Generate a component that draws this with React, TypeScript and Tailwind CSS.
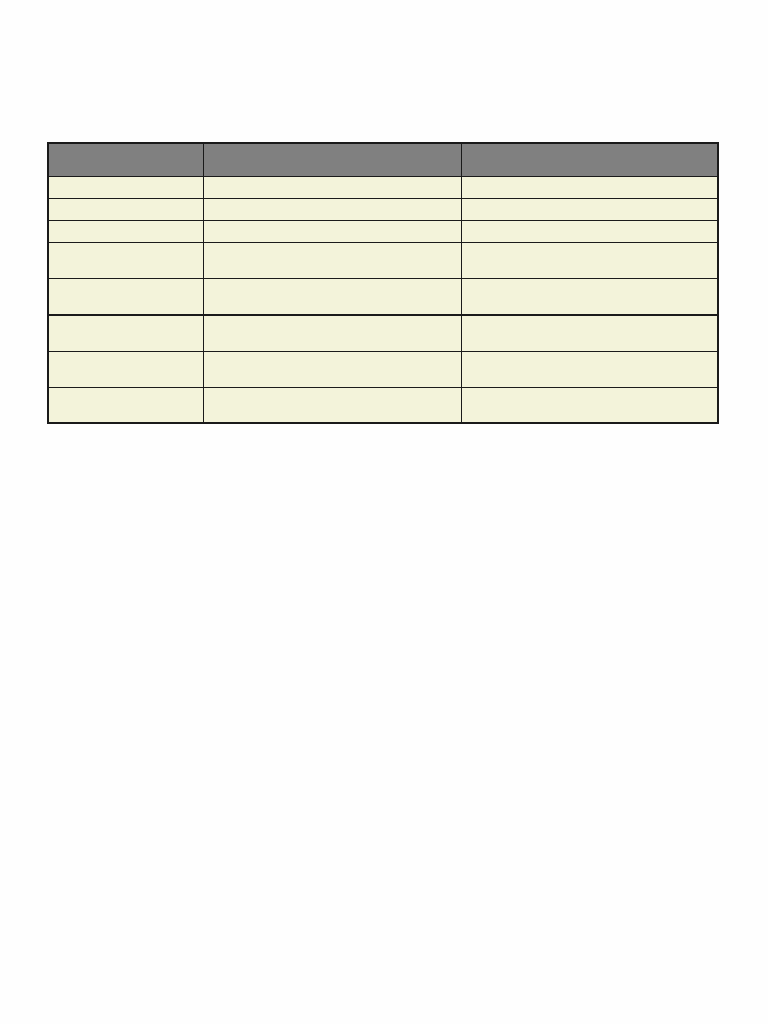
import React from "react";

const rows = [22, 22, 22, 36, 37, 36, 36, 36];

export default function App() {
  return (
    <div className="min-h-[1024px] w-[768px] bg-[#fefefe] pt-[142px] pl-[47px]" style={{ fontFamily: '"Liberation Sans", Arial, sans-serif' }}>
      <table className="w-[670px] table-fixed border-collapse border-2 border-[#1a1a1a]">
        <colgroup>
          <col className="w-[155px]" />
          <col className="w-[258px]" />
          <col className="w-[257px]" />
        </colgroup>
        <thead>
          <tr className="h-[33px] bg-[#808080]">
            <th className="border border-[#1a1a1a]"></th>
            <th className="border border-[#1a1a1a]"></th>
            <th className="border border-[#1a1a1a]"></th>
          </tr>
        </thead>
        <tbody>
          {rows.map((h, i) => (
            <tr key={i} className="bg-[#f3f3da]" style={{ height: h }}>
              <td className={`border border-[#1a1a1a] ${i === 5 ? "border-t-2" : ""}`}></td>
              <td className={`border border-[#1a1a1a] ${i === 5 ? "border-t-2" : ""}`}></td>
              <td className={`border border-[#1a1a1a] ${i === 5 ? "border-t-2" : ""}`}></td>
            </tr>
          ))}
        </tbody>
      </table>
    </div>
  );
}
